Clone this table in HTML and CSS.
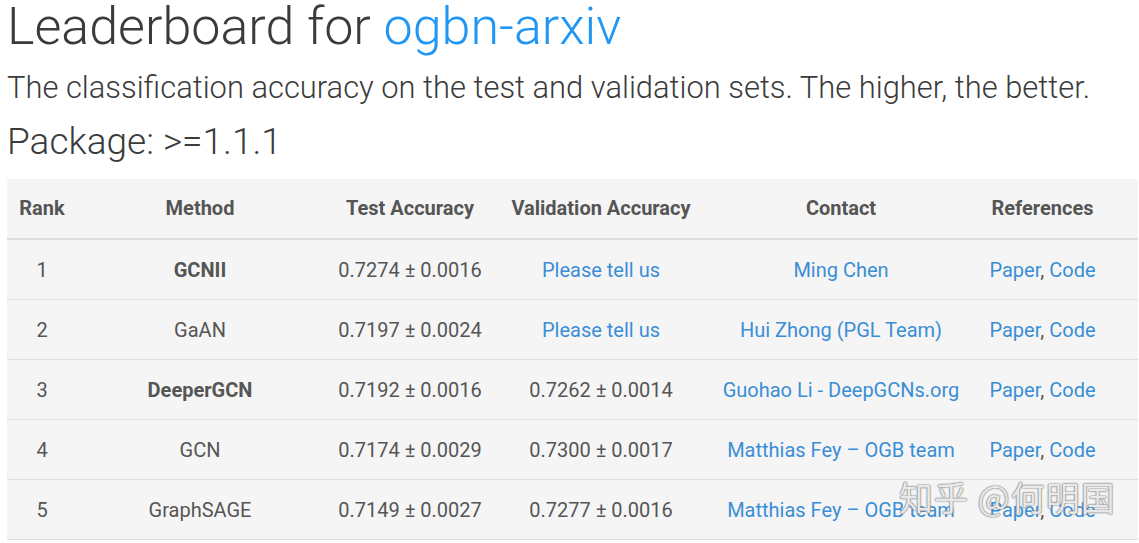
FILE: index.html
```html
<!DOCTYPE html>
<html>
<head>
<meta charset="utf-8">
<link rel="stylesheet" href="styles.css">
</head>
<body>
<div class="page">
  <h1 class="title">Leaderboard for <a class="link" href="#">ogbn-arxiv</a></h1>
  <p class="subtitle">The classification accuracy on the test and validation sets. The higher, the better.</p>
  <h3 class="package">Package: &gt;=1.1.1</h3>
  <table class="board">
    <colgroup>
      <col class="c-rank"><col class="c-method"><col class="c-test"><col class="c-val"><col class="c-contact"><col class="c-ref">
    </colgroup>
    <thead>
      <tr><th>Rank</th><th>Method</th><th>Test Accuracy</th><th>Validation Accuracy</th><th>Contact</th><th class="ref">References</th></tr>
    </thead>
    <tbody>
      <tr><td>1</td><td><b>GCNII</b></td><td>0.7274 ± 0.0016</td><td><a href="#">Please tell us</a></td><td><a href="#">Ming Chen</a></td><td class="ref"><a href="#">Paper</a>, <a href="#">Code</a></td></tr>
      <tr><td>2</td><td>GaAN</td><td>0.7197 ± 0.0024</td><td><a href="#">Please tell us</a></td><td><a href="#">Hui Zhong (PGL Team)</a></td><td class="ref"><a href="#">Paper</a>, <a href="#">Code</a></td></tr>
      <tr><td>3</td><td><b>DeeperGCN</b></td><td>0.7192 ± 0.0016</td><td>0.7262 ± 0.0014</td><td><a href="#">Guohao Li - DeepGCNs.org</a></td><td class="ref"><a href="#">Paper</a>, <a href="#">Code</a></td></tr>
      <tr><td>4</td><td>GCN</td><td>0.7174 ± 0.0029</td><td>0.7300 ± 0.0017</td><td><a href="#">Matthias Fey – OGB team</a></td><td class="ref"><a href="#">Paper</a>, <a href="#">Code</a></td></tr>
      <tr><td>5</td><td>GraphSAGE</td><td>0.7149 ± 0.0027</td><td>0.7277 ± 0.0016</td><td><a href="#">Matthias Fey – OGB team</a></td><td class="ref"><a href="#">Paper</a>, <a href="#">Code</a></td></tr>
    </tbody>
  </table>
  <div class="watermark">知乎 @何明国</div>
</div>
</body>
</html>
```
FILE: styles.css
```css
html, body {
  margin: 0;
  padding: 0;
  background: #fff;
}
.page {
  position: relative;
  padding-left: 7px;
  font-family: Roboto, "Liberation Sans", sans-serif;
  color: #444;
}
.title {
  margin: 0;
  font-size: 52px;
  font-weight: 300;
  line-height: 54px;
  color: #3b3b3b;
}
.link {
  color: #2196f3;
  text-decoration: none;
}
.subtitle {
  margin: 14px 0 0;
  font-size: 30.9px;
  font-weight: 300;
  line-height: 40px;
  color: #3b3b3b;
}
.package {
  margin: 12px 0 0;
  font-size: 37px;
  font-weight: 300;
  line-height: 44px;
  color: #3b3b3b;
}
.board {
  margin-top: 15px;
  width: 1131px;
  border-collapse: collapse;
  background: #f5f5f5;
  font-size: 20px;
  color: #555;
  table-layout: fixed;
}
.c-rank { width: 70px; }
.c-method { width: 246px; }
.c-test { width: 174px; }
.c-val { width: 208px; }
.c-contact { width: 272px; }
.c-ref { width: 161px; }
.board th {
  height: 57px;
  padding: 0 6px 2px;
  font-weight: 700;
  text-align: center;
  color: #555;
  border-bottom: 2px solid #ddd;
  white-space: nowrap;
}
.board td {
  height: 59px;
  padding: 0 6px;
  text-align: center;
  border-bottom: 1px solid #ddd;
  white-space: nowrap;
}
.board .ref {
  padding-right: 36px;
}
.board b {
  font-weight: 700;
}
.board a {
  color: #3a8ed6;
  text-decoration: none;
}
.watermark {
  position: absolute;
  left: 899px;
  top: 472px;
  font-family: "Noto Sans CJK SC", sans-serif;
  font-size: 34px;
  font-weight: 400;
  color: rgba(255, 255, 255, 0.85);
  text-shadow: 0 0 1px #777, 0 0 1px #777, 0 0 2px #999;
  letter-spacing: 1px;
}
```
